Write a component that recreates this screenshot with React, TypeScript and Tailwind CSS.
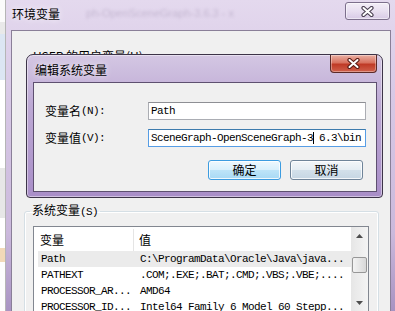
const cjk = "font-['Noto_Sans_CJK_SC',sans-serif]";
const mono = "font-['Liberation_Mono','Noto_Sans_CJK_SC',monospace] text-[11px] tracking-[-0.6px]";

function CloseGlyph({ dark = '#3b3045' }: { dark?: string }) {
  return (
    <svg width="13" height="11" viewBox="0 0 13 11">
      <path d="M2.5 2 L10.5 9 M10.5 2 L2.5 9" stroke={dark} strokeWidth="4.2" strokeLinecap="round" />
      <path d="M2.5 2 L10.5 9 M10.5 2 L2.5 9" stroke="#fff" strokeWidth="2" strokeLinecap="round" />
    </svg>
  );
}

function Arrow({ up }: { up?: boolean }) {
  return (
    <svg width="7" height="4" viewBox="0 0 7 4">
      <path d={up ? 'M0 4 L3.5 0 L7 4 Z' : 'M0 0 L3.5 4 L7 0 Z'} fill="#4d4d4d" />
    </svg>
  );
}

const rows = [
  { name: 'Path', value: 'C:\\ProgramData\\Oracle\\Java\\java...', selected: true },
  { name: 'PATHEXT', value: '.COM;.EXE;.BAT;.CMD;.VBS;.VBE;....' },
  { name: 'PROCESSOR_AR...', value: 'AMD64' },
  { name: 'PROCESSOR_ID...', value: 'Intel64 Family 6 Model 60 Stepp...' },
];

function EditDialog() {
  return (
    <div className="absolute left-[26px] top-[54px] flex h-[144px] w-[357px] flex-col rounded-t-[7px] rounded-b-[4px] border border-[#3d3448] bg-[linear-gradient(180deg,#d4c7e3_0%,#bda9d4_35%,#a98ec8_100%)] shadow-[inset_0_0_0_1px_rgba(255,255,255,0.45)]">
      {/* title bar */}
      <div className="flex h-[27px] shrink-0 items-start">
        <span className={`${cjk} pl-[8px] pt-[8px] text-[12px] leading-[14px] text-black [text-shadow:0_0_6px_#fff]`}>
          编辑系统变量
        </span>
        <div className="ml-auto mr-[5px] flex h-[18px] w-[47px] items-center justify-center rounded-b-[4px] border border-t-0 border-[#5b2a28] bg-[linear-gradient(180deg,#eab0a4_0%,#d8725f_45%,#bf3a26_55%,#d0614c_100%)] shadow-[inset_0_0_0_1px_rgba(255,255,255,0.35)]">
          <CloseGlyph dark="#5a1c16" />
        </div>
      </div>
      {/* client */}
      <div className="mx-[5px] mb-[5px] ml-[6px] flex flex-1 flex-col border border-[#5e5070] bg-[#f0f0f0] pt-[19px]">
        <div className="flex items-center">
          <div className="flex w-[114px] items-center pl-[11px] text-black">
            <span className={`${cjk} text-[12px]`}>变量名</span>
            <span className={mono}>(N):</span>
          </div>
          <div className={`${mono} flex h-[18px] w-[218px] items-center border border-[#abadb3] border-t-[#8e8f94] bg-white pl-[2px] text-black`}>
            Path
          </div>
        </div>
        <div className="mt-[9px] flex items-center">
          <div className="flex w-[114px] items-center pl-[11px] text-black">
            <span className={`${cjk} text-[12px]`}>变量值</span>
            <span className={mono}>(V):</span>
          </div>
          <div className={`${mono} flex h-[18px] w-[218px] items-center overflow-hidden whitespace-pre border border-[#569de5] border-t-[#3d7bad] bg-white pl-[2px] text-black`}>
            SceneGraph-OpenSceneGraph-3
            <span className="-mr-px inline-block h-[12px] w-px bg-black" />
            {' 6.3\\bin'}
          </div>
        </div>
        <div className="mt-[13px] flex justify-end gap-[9px] pr-[13px]">
          <button className={`${cjk} flex h-[20px] w-[73px] items-center justify-center rounded-[3px] border border-[#3c9ce0] bg-[linear-gradient(180deg,#eef8fe_0%,#d9f0fc_48%,#bde4f8_52%,#a7d9f5_100%)] text-[12px] text-black shadow-[inset_0_0_0_1px_rgba(255,255,255,0.8)]`}>
            确定
          </button>
          <button className={`${cjk} flex h-[20px] w-[73px] items-center justify-center rounded-[3px] border border-[#6f8499] bg-[linear-gradient(180deg,#f3f6f9_0%,#e5edf3_48%,#d3e0ea_52%,#c6d6e3_100%)] text-[12px] text-black shadow-[inset_0_0_0_1px_rgba(255,255,255,0.8)]`}>
            取消
          </button>
        </div>
      </div>
    </div>
  );
}

export default function App() {
  return (
    <div className="relative flex h-[311px] w-[395px] overflow-hidden bg-[#f0f0f0]">
      {/* window behind, peeking out on the left */}
      <div className="flex w-[6px] shrink-0 flex-col border-r border-[#b5b5b5] bg-[#f7f7f7]">
        <div className="h-[22px] bg-[#fbfbfb]" />
        <div className="h-[12px] bg-[#e9e9e9]" />
        <div className="h-[46px] bg-[#dce6f3]" />
        <div className="h-[88px] bg-[#ffffff]" />
        <div className="h-[50px] bg-[#e7e7e7]" />
        <div className="h-[30px] bg-[#ffffff]" />
        <div className="h-[14px] bg-[#f2d9b8]" />
        <div className="flex-1 bg-[#fdfdfd]" />
      </div>

      {/* outer window: 环境变量 */}
      <div className="flex flex-1 flex-col bg-[linear-gradient(180deg,#e4d9ee_0%,#d8c9e6_30%,#cbb9dc_75%,#a893c2_100%)]">
        <div className="relative flex h-[30px] shrink-0 items-start">
          <span className={`${cjk} pl-[6px] pt-[7px] text-[12px] leading-[14px] text-black [text-shadow:0_0_6px_#fff]`}>
            环境变量
          </span>
          <span className="ml-[26px] pt-[6px] text-[11px] leading-[14px] text-[#a597b4] opacity-50 blur-[1.4px] font-['Liberation_Sans',sans-serif]">
            ph-OpenSceneGraph-3.6.3 - x
          </span>
          <div className="ml-auto mr-[5px] mt-[2px] flex h-[18px] w-[45px] items-center justify-center rounded-[3px] border border-[#7c6f8c] bg-[linear-gradient(180deg,rgba(255,255,255,0.55)_0%,rgba(255,255,255,0.2)_50%,rgba(200,185,220,0.4)_100%)] shadow-[inset_0_0_0_1px_rgba(255,255,255,0.5)]">
            <CloseGlyph dark="#4a4052" />
          </div>
        </div>

        <div className="ml-[5px] mr-[4px] flex flex-1 flex-col border border-b-0 border-[#8a7f98] bg-[#f0f0f0]">
          <div className={`${cjk} pl-[21px] pt-[18px] text-[12px] leading-[14px] text-black`}>
            USER 的用户变量(U)
          </div>

          <fieldset className="ml-[12px] mr-[11px] mt-[140px] rounded-[3px] border border-[#d5dfe5] pb-[20px] shadow-[inset_0_0_0_1px_#fff]">
            <legend className={`${cjk} ml-[5px] px-[2px] text-[12px] leading-[14px] text-black`}>
              系统变量<span className={mono}>(S)</span>
            </legend>
            <div className="ml-[8px] mt-[7px] flex h-[86px] w-[336px] overflow-hidden border border-[#828790] bg-white">
              <div className="flex flex-1 flex-col">
                <div className="flex h-[24px] shrink-0 items-center pt-[2px] text-black">
                  <div className={`${cjk} w-[99px] pl-[6px] text-[12px]`}>变量</div>
                  <div className={`${cjk} flex h-full flex-1 items-center border-l border-[#e5e5e5] pl-[5px] text-[12px]`}>
                    值
                  </div>
                </div>
                {rows.map((r) => (
                  <div
                    key={r.name}
                    className={`flex h-[16px] shrink-0 items-center whitespace-pre text-black ${r.selected ? 'ml-[4px] bg-[#ebebeb]' : 'ml-[4px]'}`}
                  >
                    <div className={`${mono} w-[96px] pl-[3px]`}>{r.name}</div>
                    <div className={`${mono} pl-[6px]`}>{r.value}</div>
                  </div>
                ))}
              </div>
              {/* scrollbar */}
              <div className="flex w-[17px] shrink-0 flex-col items-center bg-[linear-gradient(90deg,#e6e6e6_0%,#f4f4f4_100%)]">
                <div className="flex h-[17px] w-full items-center justify-center">
                  <Arrow up />
                </div>
                <div className="mt-[13px] h-[16px] w-[15px] rounded-[2px] border border-[#979797] bg-[linear-gradient(90deg,#f3f3f3_0%,#e6e6e6_50%,#d8d8d8_100%)]" />
                <div className="mt-auto flex h-[17px] w-full items-center justify-center">
                  <Arrow />
                </div>
              </div>
            </div>
          </fieldset>
        </div>
      </div>

      <EditDialog />
    </div>
  );
}
